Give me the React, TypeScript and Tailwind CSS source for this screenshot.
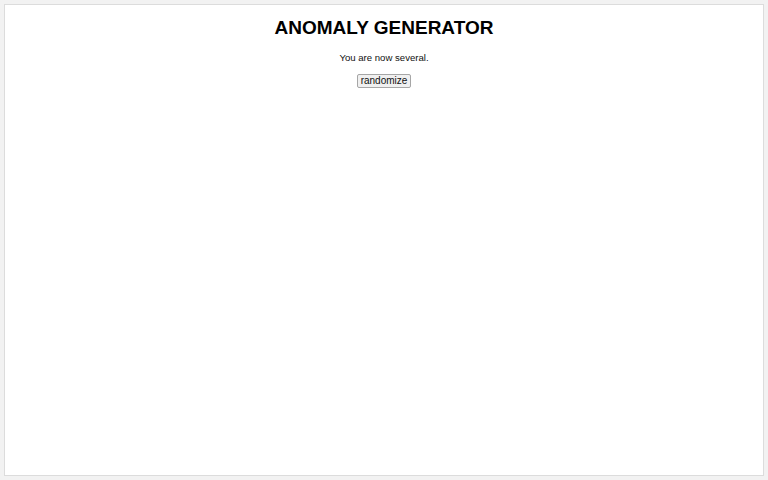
export default function App() {
  return (
    <div className="h-[480px] w-[768px] bg-[#f2f2f2] p-[4px] font-['Liberation_Sans',Arial,sans-serif]">
      <div className="flex h-full flex-col items-center border border-[#dcdcdc] bg-white pt-[12px]">
        <h1 className="text-[19px] font-bold leading-[22px] text-black">ANOMALY GENERATOR</h1>
        <p className="mt-[13px] text-[9.6px] leading-[11px] text-[#111]">You are now several.</p>
        <button
          type="button"
          className="mt-[11px] rounded-[2px] border border-[#a6a6a6] bg-[#f0f0f0] px-[3px] text-[10px] leading-[12px] text-[#111]"
        >
          randomize
        </button>
      </div>
    </div>
  );
}
